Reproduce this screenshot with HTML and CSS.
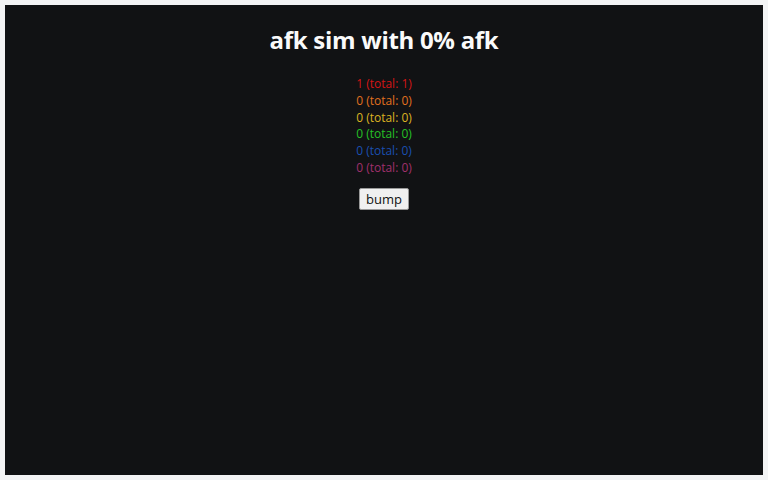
FILE: index.html
```html
<!DOCTYPE html>
<html>
<head>
    <title>afk sim</title>
    <link rel="stylesheet" href="styles.css">
</head>
<body>
    <div id="game">
        <h1>afk sim with 0% afk</h1>
        <div id="counters">
            <div class="c0">1 (total: 1)</div>
            <div class="c1">0 (total: 0)</div>
            <div class="c2">0 (total: 0)</div>
            <div class="c3">0 (total: 0)</div>
            <div class="c4">0 (total: 0)</div>
            <div class="c5">0 (total: 0)</div>
        </div>
        <button id="bump">bump</button>
    </div>
</body>
</html>
```

FILE: styles.css
```css
body { margin: 0; padding: 5px; background: #f3f4f5; font-family: "Open Sans", "Noto Sans", sans-serif; }
#game { height: 470px; background: #111214; color: #eee; text-align: center; box-sizing: border-box; padding-top: 18px; }
h1 { margin: 0; font-size: 24px; font-weight: bold; color: #fafafa; letter-spacing: -0.3px; }
#counters { margin-top: 20px; font-size: 12px; line-height: 16.8px; }
.c0 { color: #d41515; }
.c1 { color: #e0711f; }
.c2 { color: #dcb422; }
.c3 { color: #26c026; }
.c4 { color: #1a4fb0; }
.c5 { color: #a0306c; }
#bump { margin-top: 11px; font-family: inherit; font-size: 13px; padding: 1px 6px; background: #f0f0f0; border: 1px solid #999; border-radius: 2px; color: #111; }
```
